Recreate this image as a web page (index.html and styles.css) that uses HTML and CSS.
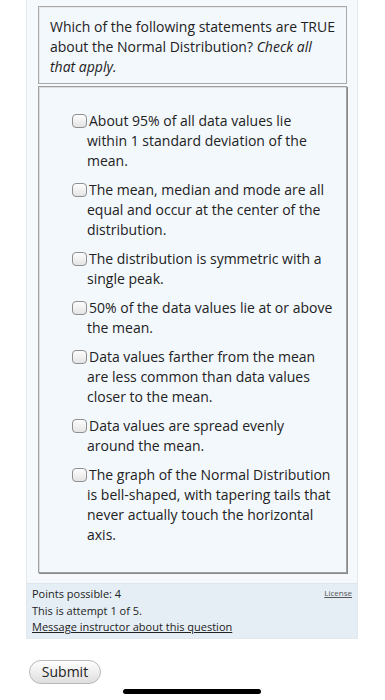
FILE: index.html
```html
<!DOCTYPE html>
<html lang="en">
<head>
    <meta charset="UTF-8">
    <meta name="viewport" content="width=device-width, initial-scale=1.0">
    <title>Question</title>
    <link rel="stylesheet" href="styles.css">
</head>
<body>
    <div id="question">
        <div id="qbody">
            <div class="prompt">
                Which of the following statements are TRUE about the Normal Distribution? <em>Check all that apply.</em>
            </div>
            <div class="choices">
                <ul>
                    <li><label><input type="checkbox">About 95% of all data values lie within 1 standard deviation of the mean.</label></li>
                    <li><label><input type="checkbox">The mean, median and mode are all equal and occur at the center of the distribution.</label></li>
                    <li><label><input type="checkbox">The distribution is symmetric with a single peak.</label></li>
                    <li><label><input type="checkbox">50% of the data values lie at or above the mean.</label></li>
                    <li><label><input type="checkbox">Data values farther from the mean are less common than data values closer to the mean.</label></li>
                    <li><label><input type="checkbox">Data values are spread evenly around the mean.</label></li>
                    <li><label><input type="checkbox">The graph of the Normal Distribution is bell-shaped, with tapering tails that never actually touch the horizontal axis.</label></li>
                </ul>
            </div>
        </div>
        <div id="qfooter">
            <a href="#" class="license">License</a>
            <div>Points possible: 4</div>
            <div>This is attempt 1 of 5.</div>
            <a href="#" class="msg">Message instructor about this question</a>
        </div>
    </div>
    <div class="actions">
        <button class="submit">Submit</button>
    </div>
    <div class="home-bar"></div>
</body>
</html>
```
FILE: styles.css
```css
:root{
    --text: #222;
    --panel: #f6f9fc;
    --box: #f3f8fd;
    --footer: #e6eef5;
}
*{
    box-sizing: border-box;
}
body{
    margin: 0;
    padding: 0 27px 0 26px;
    font-family: "Open Sans", "Noto Sans", sans-serif;
    color: var(--text);
    background: #fff;
    height: 700px;
    overflow: hidden;
}
#question{
    margin-top: -2px;
    background: var(--panel);
    border: 1px solid #e1e8ee;
    border-top: none;
}
#qbody{
    padding: 8px 10px 10px 11px;
}
.prompt{
    background: var(--box);
    border: 1px solid #a9a9a9;
    box-shadow: inset 1px 1px 0 #e8e8e8;
    font-size: 14px;
    line-height: 20px;
    padding: 10px 10px 6px 11px;
    margin-bottom: 2px;
}
.choices{
    background: var(--box);
    border: 1px solid #a0a0a0;
    box-shadow: inset 1px 1px 0 #dcdcdc, 1px 1px 0 #8a8a8a;
    padding: 24px 12px 27px 0;
}
.choices ul{
    list-style: none;
    margin: 0;
    padding: 0 0 0 48px;
}
.choices li{
    font-size: 14px;
    line-height: 20px;
    margin-bottom: 9px;
}
.choices li:last-child{
    margin-bottom: 0;
}
.choices input{
    -webkit-appearance: none;
    appearance: none;
    width: 15px;
    height: 14px;
    margin: 0 2px 0 -15px;
    vertical-align: -2px;
    border: 1px solid #8f8f8f;
    border-radius: 4px;
    background: linear-gradient(#fdfdfd, #e4e4e4);
}
#qfooter{
    background: var(--footer);
    border-top: 1px solid #dde6ee;
    font-size: 11px;
    line-height: 16.5px;
    padding: 2px 5px 2px 5px;
}
#qfooter .license{
    float: right;
    font-size: 8px;
    line-height: 14px;
    color: #555;
}
#qfooter .msg{
    color: var(--text);
}
.actions{
    padding: 21px 0 0 3px;
}
.submit{
    font-family: "Open Sans", "Noto Sans", sans-serif;
    font-size: 14px;
    color: #222;
    width: 72px;
    height: 24px;
    padding: 0;
    border: 1px solid #b9b9b9;
    border-radius: 12px;
    background: linear-gradient(#fefefe, #dedede);
}
.home-bar{
    position: absolute;
    left: 123px;
    top: 689px;
    width: 138px;
    height: 5px;
    border-radius: 3px;
    background: #000;
}
```
